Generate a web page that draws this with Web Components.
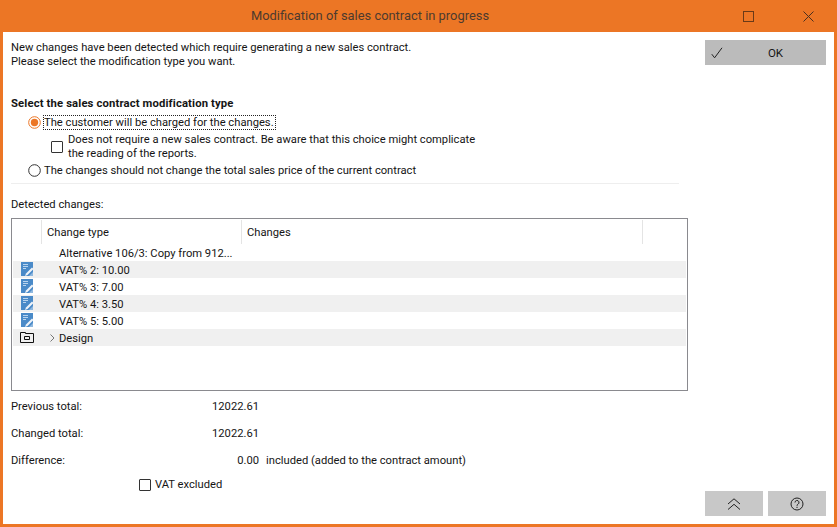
<!DOCTYPE html>
<html lang="en"><head><meta charset="utf-8"><title>Modification of sales contract in progress</title>
<style>
html,body{margin:0;padding:0;height:100%;background:#fff}
body{font:11.2px/14px Roboto,"Liberation Sans",sans-serif;color:#151515}
</style></head><body>
<app-window>
  <span slot="title">Modification of sales contract in progress</span>
  <intro-text>New changes have been detected which require generating a new sales contract.<br>Please select the modification type you want.</intro-text>
  <type-select>
    <radio-option checked focused>The customer will be charged for the changes.</radio-option>
    <check-option>Does not require a new sales contract. Be aware that this choice might complicate<br>the reading of the reports.</check-option>
    <radio-option>The changes should not change the total sales price of the current contract</radio-option>
  </type-select>
  <change-table>
    <change-row>Alternative 106/3: Copy from 912...</change-row>
    <change-row icon="edit" alt>VAT% 2: 10.00</change-row>
    <change-row icon="edit">VAT% 3: 7.00</change-row>
    <change-row icon="edit" alt>VAT% 4: 3.50</change-row>
    <change-row icon="edit">VAT% 5: 5.00</change-row>
    <change-row icon="folder" alt expander>Design</change-row>
  </change-table>
  <total-row label="Previous total:" value="12022.61"></total-row>
  <total-row label="Changed total:" value="12022.61"></total-row>
  <total-row label="Difference:" value="0.00" note="included (added to the contract amount)"></total-row>
  <vat-check>VAT excluded</vat-check>
</app-window>
<script>
function def(name, html, init){
  customElements.define(name, class extends HTMLElement{
    constructor(){super();this.attachShadow({mode:'open'}).innerHTML=html;}
    connectedCallback(){ if(init) init(this,this.shadowRoot); }
  });
}
const btn=`background:#c8c8c8;display:flex;align-items:center;justify-content:center;height:25px`;
def('app-window',`<style>
:host{display:grid;grid-template-rows:32px 1fr;width:837px;height:527px;box-sizing:border-box;border:solid #ec7625;border-width:0 3px 3px 3px;overflow:hidden}
.bar{background:#ec7625;display:grid;grid-template-columns:1fr 97px;align-items:center;margin:0 -3px;color:#4c3a2e;font-size:12.9px}
.t{text-align:center}
.ctl{display:flex;align-items:center;gap:49px;padding-left:3px}
.body{display:grid;grid-template-columns:1fr 129px;min-height:0}
main{padding:9px 0 0 8px;min-width:0;width:677px}
aside{display:flex;flex-direction:column;justify-content:space-between;padding:8px 8px 8px 0}
.ok{${btn};background:#bbb;display:grid;grid-template-columns:24px 1fr 4px;width:121px}
.ok svg{margin-left:6px}
.ok span{text-align:center;font-size:11.5px}
.bottom{display:flex;gap:5px}
.bottom div{${btn};width:58px}
svg{display:block}
</style>
<div class="bar"><div class="t"><slot name="title"></slot></div>
<div class="ctl">
<svg width="11" height="11" viewBox="0 0 11 11"><rect x=".5" y=".5" width="10" height="10" fill="none" stroke="#6a3a18"/></svg>
<svg width="11" height="11" viewBox="0 0 11 11"><path d="M.5.5l10 10M10.500.5l-10 10" stroke="#4a3020" fill="none"/></svg>
</div></div>
<div class="body"><main><slot></slot></main>
<aside>
<div class="ok"><svg width="12" height="12" viewBox="0 0 12 12"><path d="M.8 7.200l2.800 3.600L11 .8" fill="none" stroke="#222"/></svg><span>OK</span><i></i></div>
<div class="bottom">
<div><svg width="14" height="12" viewBox="0 0 14 12"><path d="M1 6L7 .8 13 6M1 11.500L7 6.300 13 11.500" fill="none" stroke="#222"/></svg></div>
<div><svg width="14" height="14" viewBox="0 0 14 14"><circle cx="7" cy="7" r="6" fill="none" stroke="#222"/><path d="M5 5.500a2 2 0 1 1 3 1.700c-.7.400-1 .800-1 1.600" fill="none" stroke="#222"/><rect x="6.500" y="9.800" width="1" height="1.200" fill="#222"/></svg></div>
</div>
</aside></div>`);
def('intro-text',`<style>:host{display:block;margin-bottom:28px}</style><slot></slot>`);
def('type-select',`<style>
:host{display:block;width:668px;margin-bottom:14px}
h3{font:inherit;font-weight:700;font-size:11.3px;letter-spacing:.13px;margin:0 0 4px}
.list{display:flex;flex-direction:column;padding:0 0 6px 17px;border-bottom:1px solid #eee}
::slotted(check-option){margin-top:4px;margin-bottom:2px}
</style><h3>Select the sales contract modification type</h3><div class="list"><slot></slot></div>`);
const radio=`<svg width="13" height="13" viewBox="0 0 13 13"><circle cx="6.500" cy="6.500" r="5.800" fill="#fff" stroke="#333"/></svg>`;
const radioOn=`<svg width="13" height="13" viewBox="0 0 13 13"><circle cx="6.500" cy="6.500" r="5.800" fill="#fff" stroke="#ec7625"/><circle cx="6.500" cy="6.500" r="3.700" fill="#ec7625"/></svg>`;
def('radio-option',`<style>
:host{display:flex;align-items:center;gap:2px;height:14px}
span{padding:0 1px 0 0;border:1px dotted transparent;line-height:13px}
:host([focused]) span{border-color:#222}
svg{display:block;flex:none}
</style><i style="display:contents" id="r"></i><span><slot></slot></span>`,(h,s)=>{s.getElementById('r').innerHTML=h.hasAttribute('checked')?radioOn:radio});
def('check-option',`<style>
:host{display:flex;align-items:center;gap:5px;margin-left:23px}
b{width:10px;height:10px;border:1px solid #333;flex:none;border-radius:1px}
</style><b></b><div><slot></slot></div>`);
def('change-table',`<style>
:host{display:block;margin-bottom:9px}
p{margin:0 0 6px}
.box{box-sizing:border-box;width:677px;height:173px;border:1px solid #8a8a8f;padding:1px}
.head{display:grid;grid-template-columns:29px 200px 401px 43px;height:24px;line-height:26px}
.head span{border-right:1px solid #e4e4e4;padding-left:5px;box-sizing:border-box;height:24px}
.head span:last-child{border:0}
</style><p>Detected changes:</p><div class="box"><div class="head"><span></span><span>Change type</span><span>Changes</span><span></span></div><slot></slot></div>`);
const edit=`<svg width="13" height="15" viewBox="0 0 13 15"><rect width="12" height="14" fill="#4a8ac8"/><path d="M2 2.500h5M2 4.500h5M2 6.500h3" stroke="#b9d4ee"/><path d="M11 5.500l1.500 1.500-6 6-2.500 1 1-2.500z" fill="#eef3f9"/><path d="M8 14h4V10z" fill="#8fb8df"/></svg>`;
const folder=`<svg width="14" height="11" viewBox="0 0 14 11"><path d="M.5 10.500V.5h5v1h8v9z" fill="none" stroke="#111"/><path d="M4.500 4.500h5v3h-5z" fill="none" stroke="#111"/></svg>`;
def('change-row',`<style>
:host{display:grid;grid-template-columns:29px 17px 1fr;height:17px;align-items:center}
:host([alt]){background:#f0f0f0}
.i{display:flex;justify-content:flex-start;padding-left:8px}
:host([expander]) .i{padding-left:7px}
.x{display:flex;justify-content:center;padding-left:3px}
.txt{line-height:17px;padding-top:1px;height:16px;overflow:visible}
</style><div class="i" id="i"></div><div class="x" id="x"></div><div class="txt"><slot></slot></div>`,(h,s)=>{
  const k=h.getAttribute('icon');
  s.getElementById('i').innerHTML=k==='edit'?edit:k==='folder'?folder:'';
  if(h.hasAttribute('expander'))s.getElementById('x').innerHTML=`<svg width="5" height="8" viewBox="0 0 5 8"><path d="M.5.5L4 4 .5 7.500" fill="none" stroke="#777"/></svg>`;
});
def('total-row',`<style>
:host{display:grid;grid-template-columns:183px 58px auto;column-gap:7px;height:14px;margin-bottom:13px}
.v{text-align:right}
</style><span id="l"></span><span class="v" id="v"></span><span id="n"></span>`,(h,s)=>{
  s.getElementById('l').textContent=h.getAttribute('label');
  s.getElementById('v').textContent=h.getAttribute('value');
  s.getElementById('n').textContent=h.getAttribute('note')||'';
});
def('vat-check',`<style>
:host{display:flex;align-items:center;gap:4px;margin:-3px 0 0 128px;height:14px}
b{width:10px;height:10px;border:1px solid #333;flex:none;border-radius:1px}
</style><b></b><span><slot></slot></span>`);
</script>
</body></html>
